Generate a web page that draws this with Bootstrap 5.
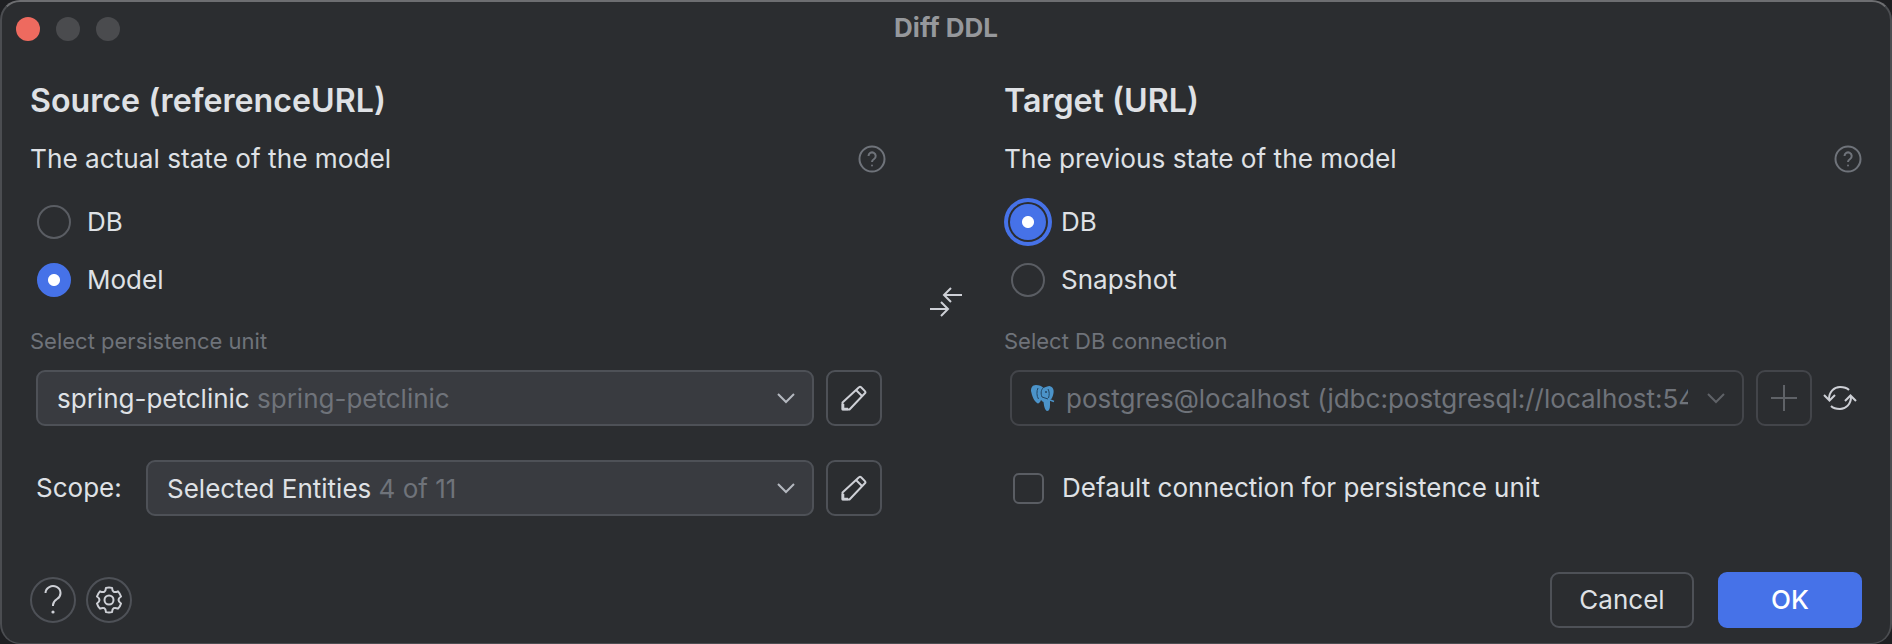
<!DOCTYPE html>
<html lang="en">
<head>
<meta charset="utf-8">
<title>Diff DDL</title>
<link rel="stylesheet" href="https://cdn.jsdelivr.net/npm/bootstrap@5.3.0/dist/css/bootstrap.min.css">
<style>
html,body{height:100%;margin:0;background:#1e1f22}
body{font-family:Inter,"Liberation Sans",sans-serif;color:#dfe1e5;font-size:26px;line-height:1.2;overflow:hidden}
.dlg{height:644px;background:#2b2d30;border-radius:20px;border-style:solid;border-color:#6d6e71 #4b4d51 #4b4d51;border-width:2px 2px 1px 2px;display:flex;flex-direction:column}
.tbar{height:54px;padding:0 14px;display:grid;grid-template-columns:1fr auto 1fr;align-items:center}
.lights{display:flex;gap:16px}
.lamp{width:24px;height:24px;border-radius:50%;background:#4a4b4e}
.lamp-red{background:#ee6a5f}
.ttl{font-size:26px;font-weight:700;color:#96989c;padding-bottom:3px}
.panes{display:flex;padding:0 28px;flex:1 1 auto}
.pane-l{width:856px;flex:none}
.pane-m{width:118px;flex:none;display:flex;align-items:flex-start;justify-content:center;padding:231px 0 0 2px}
.pane-r{flex:1 1 auto;min-width:0}
.h-sec{font-size:32.2px;font-weight:600;line-height:36px;margin:0;padding-top:27px;color:#dfe1e5}
.desc{display:flex;align-items:center;justify-content:space-between;height:28px;margin-top:26px;font-size:26.2px}
.hint{width:28px;height:28px;flex:none;display:block}
.rd-row{display:flex;align-items:center;height:34px;padding-left:7px;gap:16px;margin-bottom:24px}
.rd-first{margin-top:32px}
.rd-in.form-check-input{width:34px;height:34px;margin:0;flex:none;background-color:transparent;border:2px solid #5a5d63;float:none}
.rd-in.form-check-input:checked{background-color:#4672e8;border-color:#4672e8;background-image:radial-gradient(circle,#fff 5.5px,transparent 6.5px)}
.rd-in.is-foc{box-shadow:0 0 0 1px #4672e8,0 0 0 3px #2b2d30,0 0 0 7px #4672e8}
.lbl-mut{font-size:22px;line-height:24px;color:#6f737a;margin-top:32px}
.c-row{display:flex;align-items:center;gap:12px;height:56px;padding-left:6px;padding-right:4px}
.c-row-r{padding-right:5px}
.c-row1{margin-top:17px}
.c-row2{margin-top:34px}
.combo{flex:1 1 auto;min-width:0;height:56px;display:flex;align-items:center;background:#393b40;border:2px solid #4e5157;border-radius:9px;padding:0 16px 0 19px}
.combo-off{background:transparent;border-color:#43454a;padding-left:18px}
.combo-txt{flex:1 1 auto;min-width:0;white-space:nowrap;overflow:hidden;padding-top:1px}
.fade-t{color:#6f737a}
.pg-ic{flex:none;margin-right:10px}
.chev{flex:none;width:20px;height:12px;margin-left:18px}
.sq-btn.btn{width:56px;height:56px;padding:0;flex:none;border:2px solid #4e5157;border-radius:9px;background:transparent;display:flex;align-items:center;justify-content:center}
.sq-off.btn{border-color:#43454a}
.scope-l{width:98px;flex:none}
.refresh{width:34px;height:28px;flex:none;margin-left:-1px}
.chk-row{display:flex;align-items:center;gap:18px;height:56px;margin-top:34px;padding-left:9px}
.chk-in.form-check-input{width:31px;height:31px;margin:0;float:none;background-color:transparent;border:2px solid #5a5d63;border-radius:6px;flex:none}
.foot{display:flex;align-items:center;justify-content:space-between;padding:0 28px;height:56px;margin-bottom:15px}
.foot-l{display:flex;gap:10px}
.rnd{width:46px;height:46px;border:2px solid #4e5157;border-radius:50%;display:flex;align-items:center;justify-content:center;background:transparent;padding:0}
.foot-r{display:flex;gap:24px}
.act.btn{width:144px;height:56px;font-size:26px;border-radius:9px;padding:0;line-height:1}
.act-c.btn{background:transparent;border:2px solid #4e5157;color:#dfe1e5}
.act-o.btn{background:#4672e8;border:2px solid #4672e8;color:#fff;font-weight:500}
</style>
</head>
<body>
<div class="dlg">
  <div class="tbar">
    <div class="lights"><span class="lamp lamp-red"></span><span class="lamp"></span><span class="lamp"></span></div>
    <div class="ttl">Diff DDL</div>
    <div></div>
  </div>
  <div class="panes">
    <section class="pane-l">
      <h2 class="h-sec">Source (referenceURL)</h2>
      <div class="desc"><span>The actual state of the model</span>
        <svg class="hint" viewBox="0 0 28 28" fill="none" stroke="#6f737a" stroke-width="2"><circle cx="14" cy="14" r="12.5"/><path d="M10.500 11a3.600 3.600 0 1 1 5.600 3c-1.400.9-2.100 1.500-2.100 3"/><circle cx="14" cy="20.500" r="1" fill="#6f737a" stroke="none"/></svg>
      </div>
      <label class="rd-row rd-first"><input class="form-check-input rd-in" type="radio" name="src">DB</label>
      <label class="rd-row"><input class="form-check-input rd-in" type="radio" name="src" checked>Model</label>
      <div class="lbl-mut">Select persistence unit</div>
      <div class="c-row c-row1">
        <div class="combo"><div class="combo-txt">spring-petclinic <span class="fade-t">spring-petclinic</span></div>
          <svg class="chev" viewBox="0 0 20 12" fill="none" stroke="#b4b8bf" stroke-width="2"><path d="M2 2l8 8 8-8"/></svg></div>
        <button class="btn sq-btn" type="button" aria-label="Edit"><svg width="26" height="26" viewBox="0 0 26 26" fill="none" stroke="#ced0d6" stroke-width="2" stroke-linejoin="round"><path d="M1.500 24.500V17.500L18 2.200a1.500 1.500 0 0 1 2.100 0l3.800 3.900a1.500 1.500 0 0 1 0 2.100L8.500 24.500z"/><path d="M15 5l6 6"/><path d="M2 19v5h5" stroke-width="2.600"/></svg></button>
      </div>
      <div class="c-row c-row2">
        <div class="scope-l">Scope:</div>
        <div class="combo"><div class="combo-txt">Selected Entities <span class="fade-t">4 of 11</span></div>
          <svg class="chev" viewBox="0 0 20 12" fill="none" stroke="#b4b8bf" stroke-width="2"><path d="M2 2l8 8 8-8"/></svg></div>
        <button class="btn sq-btn" type="button" aria-label="Edit"><svg width="26" height="26" viewBox="0 0 26 26" fill="none" stroke="#ced0d6" stroke-width="2" stroke-linejoin="round"><path d="M1.500 24.500V17.500L18 2.200a1.500 1.500 0 0 1 2.100 0l3.800 3.900a1.500 1.500 0 0 1 0 2.100L8.500 24.500z"/><path d="M15 5l6 6"/><path d="M2 19v5h5" stroke-width="2.600"/></svg></button>
      </div>
    </section>
    <div class="pane-m">
      <svg width="32" height="30" viewBox="0 -1 32 30" fill="none" stroke="#ced0d6" stroke-width="2"><path d="M32 7H14M21 0l-7 7 7 7"/><path d="M0 21h18M11 14l7 7-7 7"/></svg>
    </div>
    <section class="pane-r">
      <h2 class="h-sec">Target (URL)</h2>
      <div class="desc"><span>The previous state of the model</span>
        <svg class="hint" viewBox="0 0 28 28" fill="none" stroke="#6f737a" stroke-width="2"><circle cx="14" cy="14" r="12.5"/><path d="M10.500 11a3.600 3.600 0 1 1 5.600 3c-1.400.9-2.100 1.500-2.100 3"/><circle cx="14" cy="20.500" r="1" fill="#6f737a" stroke="none"/></svg>
      </div>
      <label class="rd-row rd-first"><input class="form-check-input rd-in is-foc" type="radio" name="tgt" checked>DB</label>
      <label class="rd-row"><input class="form-check-input rd-in" type="radio" name="tgt">Snapshot</label>
      <div class="lbl-mut">Select DB connection</div>
      <div class="c-row c-row1 c-row-r">
        <div class="combo combo-off">
          <svg class="pg-ic" width="26" height="28" viewBox="0 0 26 28"><path d="M6 1C2 1 1 4 1 7c1 5 3 10 6 12 1 1 3 0 4-3 1 1 2 2 2.500 2 .5 3 1 8 3.500 9 2 0 3-2 3-6v-5c2-1 3-4 3.500-7 .7-3-.5-6-4-7-2 0-4 1-6 2C12 2 9 1 6 1Z" fill="#4b93c9"/><path d="M20 16l4 1.500" stroke="#4b93c9" stroke-width="1.500"/><path d="M8 4c-1.500 3-1.500 8 .5 11M13.500 3.500c-2.500 2-3 6-1.500 9.500l6 2M18 5c1.500 2.500 1.500 6 .5 9" fill="none" stroke="#234562" stroke-width="1"/><circle cx="16" cy="8" r="1" fill="#234562"/></svg>
          <div class="combo-txt fade-t">postgres@localhost (jdbc:postgresql://localhost:54</div>
          <svg class="chev" viewBox="0 0 20 12" fill="none" stroke="#5f6267" stroke-width="2"><path d="M2 2l8 8 8-8"/></svg></div>
        <button class="btn sq-btn sq-off" type="button" aria-label="Add"><svg width="28" height="28" viewBox="0 0 28 28" fill="none" stroke="#5f6267" stroke-width="2"><path d="M14 1v26M1 14h26"/></svg></button>
        <svg class="refresh" viewBox="0 0 34 28" fill="none" stroke="#ced0d6" stroke-width="2"><path d="M6 15C6 8 11 3 17 3c4 0 7 1 9 3"/><path d="M1 11l5.500 5.500L12 11"/><path d="M28 13c0 7-5 12-11 12-4 0-7-1-9-3"/><path d="M22 17l5.500-5.500L33 17"/></svg>
      </div>
      <label class="chk-row"><input class="form-check-input chk-in" type="checkbox">Default connection for persistence unit</label>
    </section>
  </div>
  <div class="foot">
    <div class="foot-l">
      <button class="rnd" type="button" aria-label="Help"><svg width="20" height="30" viewBox="0 0 20 30" fill="none" stroke="#ced0d6" stroke-width="2"><path d="M2.500 8a7.500 7 0 1 1 11.500 6c-2.500 1.700-4 3-4 6v1"/><circle cx="10" cy="27" r="1.600" fill="#ced0d6" stroke="none"/></svg></button>
      <button class="rnd" type="button" aria-label="Settings"><svg width="28" height="28" viewBox="0 0 28 28" fill="none" stroke="#ced0d6" stroke-width="2" stroke-linejoin="round"><path d="M10.980 1.870A13 13 0 0 1 17.020 1.870Q17.500 7.940 22.990 5.320A13 13 0 0 1 26.020 10.550Q21 14 26.020 17.450A13 13 0 0 1 22.990 22.680Q17.500 20.060 17.020 26.130A13 13 0 0 1 10.980 26.130Q10.500 20.060 5.010 22.680A13 13 0 0 1 1.980 17.450Q7 14 1.980 10.550A13 13 0 0 1 5.010 5.320Q10.500 7.940 10.980 1.870Z"/><circle cx="14" cy="14" r="4.500"/></svg></button>
    </div>
    <div class="foot-r">
      <button class="btn act act-c" type="button">Cancel</button>
      <button class="btn act act-o" type="button">OK</button>
    </div>
  </div>
</div>
</body>
</html>
